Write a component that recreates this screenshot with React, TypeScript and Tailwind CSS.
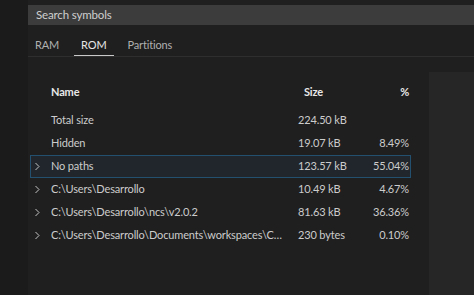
import React from "react";

const rows = [
  { name: "No paths", size: "123.57 kB", pct: "55.04%", selected: true },
  { name: "C:\\Users\\Desarrollo", size: "10.49 kB", pct: "4.67%" },
  { name: "C:\\Users\\Desarrollo\\ncs\\v2.0.2", size: "81.63 kB", pct: "36.36%" },
  { name: "C:\\Users\\Desarrollo\\Documents\\workspaces\\CoreMark", size: "230 bytes", pct: "0.10%" },
];

function Chevron() {
  return (
    <svg width="8" height="9" viewBox="0 0 8 9" className="text-[#c5c5c5]">
      <path d="M2.5 1 L6 4.5 L2.5 8" fill="none" stroke="currentColor" strokeWidth="1" />
    </svg>
  );
}

export default function App() {
  return (
    <div
      className="flex h-[295px] w-[474px] overflow-hidden bg-[#1f1f1f] text-[11px] tracking-[-0.15px] text-[#cccccc]"
      style={{ fontFamily: 'Lato, "Noto Sans", sans-serif' }}
    >
      <div className="w-[28px] shrink-0 bg-[#1b1b1b]" />
      <div className="flex min-w-0 flex-1 flex-col">
        <div className="mt-[5px] flex h-[20px] items-center bg-[#3c3c3c] pl-[8px] text-[11.5px] text-[#cfcfcf]">
          Search symbols
        </div>
        <div className="mt-[10px] flex h-[22px] border-b border-[#2e2e2e] text-[11px] text-[#b0b0b0]">
          <div className="flex items-center px-[7px]">RAM</div>
          <div className="ml-[8px] flex items-center border-b-[1.5px] border-[#c8c8c8] px-[7px] pt-[1px] text-[#e6e6e6]">
            ROM
          </div>
          <div className="ml-[7px] flex items-center px-[7px]">Partitions</div>
        </div>
        <div className="flex flex-1">
          <div className="w-[383px] pl-[2px] pt-[24px]">
            <div className="flex h-[23px] items-center font-bold text-[#e8e8e8]">
              <div className="w-[21px]" />
              <div className="w-[253px]">Name</div>
              <div className="w-[50px]">Size</div>
              <div className="flex-1 pr-[2px] text-right">%</div>
            </div>
            <div className="mt-[5px] flex h-[23px] items-center">
              <div className="w-[21px]" />
              <div className="w-[247px]">Total size</div>
              <div className="w-[62px]">224.50 kB</div>
              <div className="flex-1 pr-[2px] text-right" />
            </div>
            <div className="flex h-[23px] items-center">
              <div className="w-[21px]" />
              <div className="w-[247px]">Hidden</div>
              <div className="w-[62px]">19.07 kB</div>
              <div className="flex-1 pr-[2px] text-right">8.49%</div>
            </div>
            {rows.map((r) => (
              <div
                key={r.name}
                className={
                  "flex h-[23px] items-center border " +
                  (r.selected ? "border-[#245070] bg-[#20262b]" : "border-transparent")
                }
              >
                <div className="flex w-[20px] pl-[2px]">
                  <Chevron />
                </div>
                <div className="w-[247px] truncate pr-[14px]">{r.name}</div>
                <div className="w-[62px]">{r.size}</div>
                <div className="flex-1 pr-[1px] text-right">{r.pct}</div>
              </div>
            ))}
          </div>
          <div className="flex flex-1 justify-end pt-[15px]">
            <div className="w-[45px] bg-[#262626]" />
          </div>
        </div>
      </div>
    </div>
  );
}
